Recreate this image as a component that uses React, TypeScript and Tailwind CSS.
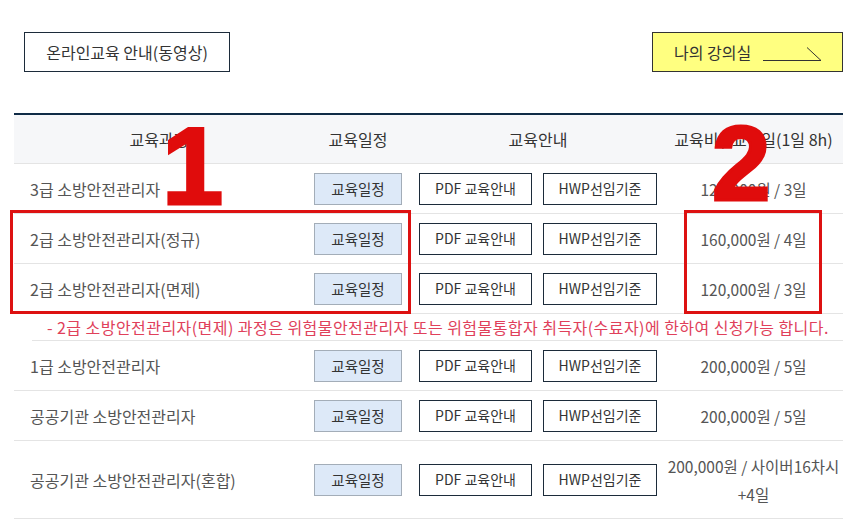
import React from "react";

const rows = [
  { name: "3급 소방안전관리자", price: "120,000원 / 3일" },
  { name: "2급 소방안전관리자(정규)", price: "160,000원 / 4일" },
  { name: "2급 소방안전관리자(면제)", price: "120,000원 / 3일" },
];
const rows2 = [
  { name: "1급 소방안전관리자", price: "200,000원 / 5일" },
  { name: "공공기관 소방안전관리자", price: "200,000원 / 5일" },
];

function Row({ name, price, tall }: { name: string; price: React.ReactNode; tall?: boolean }) {
  return (
    <div
      className={`grid grid-cols-[290px_108px_252px_179px] items-center border-b border-[#e4e4e4] ${
        tall ? "h-[78px]" : "h-[50px]"
      }`}
    >
      <div className="pl-4 text-[16px] text-[#555]">{name}</div>
      <div className="flex justify-center">
        <div className="w-[88px] h-[32px] flex items-center justify-center bg-[#dde9f8] border border-[#a3adb8] text-[14.5px] text-[#333]">
          교육일정
        </div>
      </div>
      <div className="flex justify-center gap-[11px]">
        <div className="w-[113px] h-[32px] flex items-center justify-center bg-white border border-[#1c2b3a] text-[14px] text-[#333]">
          PDF 교육안내
        </div>
        <div className="w-[114px] h-[32px] flex items-center justify-center bg-white border border-[#1c2b3a] text-[14px] text-[#333]">
          HWP선임기준
        </div>
      </div>
      <div className="text-center text-[15.5px] leading-[28px] text-[#555]">{price}</div>
    </div>
  );
}

export default function App() {
  return (
    <div
      className="relative w-[858px] h-[525px] bg-white overflow-hidden pt-[32px]"
      style={{ fontFamily: '"Noto Sans CJK KR", "Noto Sans", sans-serif' }}
    >
      <div className="flex justify-between pl-[24px] pr-[15px]">
        <div className="w-[206px] h-[40px] flex items-center justify-center border border-[#1c2b3a] text-[16px] text-[#333]">
          온라인교육 안내(동영상)
        </div>
        <div className="w-[191px] h-[40px] flex items-center gap-[12px] pl-[21px] bg-[#ffff80] border border-[#333] text-[16px] text-[#333]">
          <span>나의 강의실</span>
          <svg width="60" height="16" viewBox="0 0 60 16" className="mt-[3px]">
            <line x1="0" y1="14.5" x2="58" y2="14.5" stroke="#333" strokeWidth="1" />
            <line x1="44" y1="1.5" x2="58" y2="14.5" stroke="#333" strokeWidth="1" />
          </svg>
        </div>
      </div>

      <div className="ml-[14px] w-[829px] mt-[41px]">
        <div className="grid grid-cols-[290px_108px_252px_179px] items-center h-[51px] border-t-2 border-[#0f2b46] bg-[#f6f7f9] border-b border-b-[#e4e4e4] text-[16px] text-[#333]">
          <div className="text-center">교육과정</div>
          <div className="text-center">교육일정</div>
          <div className="text-center">교육안내</div>
          <div className="text-center">교육비 / 교육일(1일 8h)</div>
        </div>
        {rows.map((r) => (
          <Row key={r.name} name={r.name} price={r.price} />
        ))}
        <div className="ml-[18px] h-[27px] flex items-center pl-[15px] border-b border-[#e4e4e4] text-[16px] tracking-[0.45px] text-[#e0405a]">
          - 2급 소방안전관리자(면제) 과정은 위험물안전관리자 또는 위험물통합자 취득자(수료자)에 한하여 신청가능 합니다.
        </div>
        {rows2.map((r) => (
          <Row key={r.name} name={r.name} price={r.price} />
        ))}
        <Row
          name="공공기관 소방안전관리자(혼합)"
          price={
            <>
              200,000원 / 사이버16차시
              <br />
              +4일
            </>
          }
          tall
        />
      </div>

      <div className="absolute left-[10px] top-[210px] w-[401px] h-[104px] border-[3px] border-[#dd1111]" />
      <div className="absolute left-[684px] top-[210px] w-[138px] h-[104px] border-[3px] border-[#dd1111]" />
      <div
        className="absolute left-[162px] top-[111px] text-[110px] leading-none font-bold text-[#e00c0c] [-webkit-text-stroke:3px_#e00c0c]"
        style={{ fontFamily: '"Liberation Sans", Arial, sans-serif' }}
      >
        1
      </div>
      <div
        className="absolute left-[712px] top-[111px] text-[105px] leading-none font-bold text-[#e00c0c] [-webkit-text-stroke:3px_#e00c0c]"
        style={{ fontFamily: '"Liberation Sans", Arial, sans-serif' }}
      >
        2
      </div>
    </div>
  );
}
